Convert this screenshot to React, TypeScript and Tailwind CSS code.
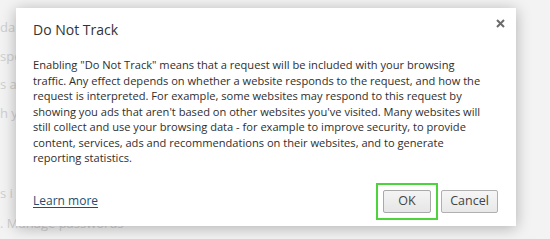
import React from "react";

const bodyLines = [
  'Enabling "Do Not Track" means that a request will be included with your browsing',
  "traffic. Any effect depends on whether a website responds to the request, and how the",
  "request is interpreted. For example, some websites may respond to this request by",
  "showing you ads that aren't based on other websites you've visited. Many websites will",
  "still collect and use your browsing data - for example to improve security, to provide",
  "content, services, ads and recommendations on their websites, and to generate",
  "reporting statistics.",
];

export default function App() {
  return (
    <div
      className="relative w-[550px] h-[239px] overflow-hidden bg-[#f3f3f3]"
      style={{ fontFamily: '"Open Sans", "Noto Sans", sans-serif' }}
    >
      {/* faded page behind */}
      <div className="flex flex-col text-[13px] text-[#cfcfcf] leading-none">
        <div className="h-[20px]" />
        <div className="pt-[1px] h-[30px]">da</div>
        <div className="h-[28px]">spe</div>
        <div className="h-[29px]">s ar</div>
        <div className="h-[80px]">h y</div>
        <div className="h-[30px]">s i</div>
        <div>. Manage passwords</div>
      </div>

      {/* dialog */}
      <div className="absolute left-[16px] top-[8px] w-[500px] h-[218px] bg-white shadow-[0_2px_14px_rgba(0,0,0,0.28)] text-[#333]">
        <div className="flex items-start justify-between pl-[17px] pr-[11px] pt-[10px]">
          <div className="text-[14px] leading-[24px] text-[#333]">Do Not Track</div>
          <svg width="9" height="9" viewBox="0 0 9 9" className="mt-[1px]">
            <path d="M1 1 L8 8 M8 1 L1 8" stroke="#6b6b6b" strokeWidth="2" />
          </svg>
        </div>
        <div className="pl-[17px] pt-[15px] text-[11.1px] leading-[15.5px] text-[#2e2e2e]">
          {bodyLines.map((l, i) => (
            <div key={i} className="whitespace-nowrap">{l}</div>
          ))}
        </div>
        <div className="flex items-center justify-between pl-[17px] pr-[18px] pt-[24px]">
          <a className="text-[12px] text-[#1f4f6e] underline underline-offset-2">Learn more</a>
          <div className="flex items-center gap-[3px]">
            <div className="p-[5px] border-2 border-[#4cd43a] -my-[7px]">
              <button className="w-[48px] h-[23px] border border-[#a9a9a9] rounded-[2px] bg-gradient-to-b from-[#f4f4f4] to-[#e6e6e6] text-[12.5px] text-[#444] flex items-center justify-center">
                OK
              </button>
            </div>
            <button className="w-[57px] h-[23px] border border-[#b0b0b0] rounded-[2px] bg-gradient-to-b from-[#f6f6f6] to-[#e8e8e8] text-[12.5px] text-[#444] flex items-center justify-center">
              Cancel
            </button>
          </div>
        </div>
      </div>
    </div>
  );
}
